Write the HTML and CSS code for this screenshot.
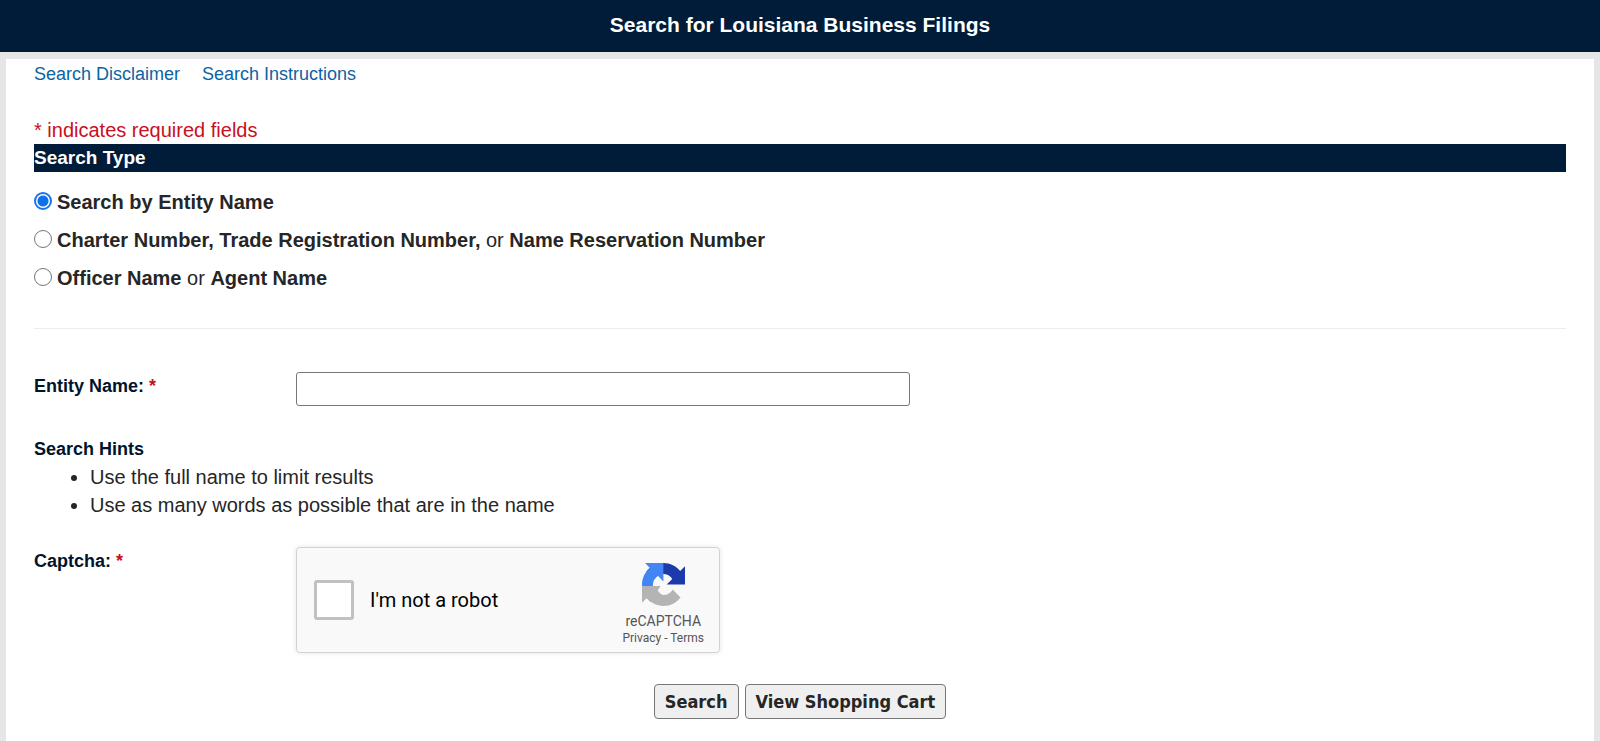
FILE: index.html
```html
<!DOCTYPE html>
<html lang="en">
<head>
<meta charset="utf-8">
<meta name="viewport" content="width=device-width, initial-scale=1">
<title>Search for Louisiana Business Filings</title>
<link rel="stylesheet" href="styles.css">
</head>
<body>
<header class="banner"><h1 class="banner-title">Search for Louisiana Business Filings</h1></header>
<main class="panel">
  <nav class="links">
    <a href="#disclaimer">Search Disclaimer</a>
    <a href="#instructions">Search Instructions</a>
  </nav>
  <form class="search-form">
    <p class="required-note">* indicates required fields</p>
    <h2 class="section-bar" id="search-type">Search Type</h2>
    <div class="options" role="radiogroup" aria-labelledby="search-type">
      <div class="option">
        <input class="radio" type="radio" name="type" id="by-entity" checked>
        <label for="by-entity"><b>Search by Entity Name</b></label>
      </div>
      <div class="option">
        <input class="radio" type="radio" name="type" id="by-number">
        <label for="by-number"><b>Charter Number, Trade Registration Number,</b> or <b>Name Reservation Number</b></label>
      </div>
      <div class="option">
        <input class="radio" type="radio" name="type" id="by-officer">
        <label for="by-officer"><b>Officer Name</b> or <b>Agent Name</b></label>
      </div>
    </div>
    <hr class="divider">
    <div class="field">
      <label class="field-label" for="entity-name">Entity Name: <span class="star">*</span></label>
      <input class="text-box" type="text" id="entity-name" required>
    </div>
    <section class="hints">
      <h3 class="hints-title">Search Hints</h3>
      <ul class="hints-list">
        <li>Use the full name to limit results</li>
        <li>Use as many words as possible that are in the name</li>
      </ul>
    </section>
    <div class="field">
      <span class="field-label">Captcha: <span class="star">*</span></span>
      <div class="captcha">
        <input class="captcha-check" type="checkbox" id="robot">
        <label class="captcha-label" for="robot">I'm not a robot</label>
        <div class="captcha-brand">
          <svg class="captcha-logo" viewBox="0 0 64 64" aria-hidden="true">
            <path fill="#1c3aa9" d="M64 31.955l-.033-1.37V4.687l-7.16 7.16C50.948 4.674 42.033.093 32.05.093c-10.4 0-19.622 4.96-25.458 12.64l11.736 11.86a15.55 15.55 0 0 1 4.754-5.334c2.05-1.6 4.952-2.906 8.968-2.906.485 0 .86.057 1.135.163 4.976.393 9.288 3.14 11.828 7.124l-8.307 8.307L64 31.953"/>
            <path fill="#4285f4" d="M31.862.094l-1.37.033H4.594l7.16 7.16C4.58 13.147 0 22.06 0 32.046c0 10.4 4.96 19.622 12.64 25.458L24.5 45.768a15.55 15.55 0 0 1-5.334-4.754c-1.6-2.05-2.906-4.952-2.906-8.968 0-.485.057-.86.163-1.135.393-4.976 3.14-9.288 7.124-11.828l8.307 8.307L31.86.095"/>
            <path fill="#b4b4b4" d="M.001 32.045l.033 1.37v25.898l7.16-7.16c5.86 7.173 14.774 11.754 24.76 11.754 10.4 0 19.622-4.96 25.458-12.64l-11.736-11.86a15.55 15.55 0 0 1-4.754 5.334c-2.05 1.6-4.952 2.906-8.968 2.906-4-.5-6.5-3.6-8.6-6.6l4.3-6.7c-10.522.04-22.4.066-27.295-.005"/>
          </svg>
          <span class="captcha-name">reCAPTCHA</span>
          <span class="captcha-legal"><a href="#privacy">Privacy</a> - <a href="#terms">Terms</a></span>
        </div>
      </div>
    </div>
    <div class="actions">
      <button class="button" type="submit">Search</button>
      <button class="button" type="button">View Shopping Cart</button>
    </div>
  </form>
</main>
</body>
</html>
```

FILE: styles.css
```css
* { box-sizing: border-box; }

body {
  margin: 0;
  min-height: 100vh;
  display: flex;
  flex-direction: column;
  background: #e6e6e6;
  color: #262626;
  font-family: "Liberation Sans", Arial, sans-serif;
  font-size: 20px;
  line-height: 28px;
}

h1, h2, h3, p, ul { margin: 0; padding: 0; }

.banner {
  background: #001c38;
  color: #fff;
  padding: 11px 16px 13px;
  text-align: center;
}

.banner-title { font-size: 21px; line-height: 28px; }

.panel {
  flex: 1;
  margin: 7px 6px 0;
  padding: 1px 28px 20px;
  background: #fff;
}

.links { display: flex; gap: 22px; font-size: 18px; }
.links a { color: #0b63a5; text-decoration: none; }

.required-note { margin-top: 28px; color: #c8101c; }

.section-bar {
  background: #001c38;
  color: #fff;
  font-size: 19px;
  line-height: 28px;
}

.options { padding-top: 16px; }

.option {
  display: flex;
  align-items: flex-start;
  gap: 5px;
  padding-bottom: 10px;
}

.radio {
  appearance: none;
  flex: none;
  width: 18px;
  height: 18px;
  margin: 4px 0 0;
  border: 1px solid #767676;
  border-radius: 50%;
  background: #fff;
}

.radio:checked {
  border: 2px solid #1a73e8;
  background: radial-gradient(circle, #1070e8 5px, #fff 6px);
}

.divider {
  margin: 26px 0 43px;
  border: 0;
  border-top: 1px solid #ececec;
}

.field {
  display: grid;
  grid-template-columns: 262px minmax(0, 1fr);
  align-items: start;
}

.field-label { color: #00142c; font-size: 18px; font-weight: bold; }
.star { color: #c8101c; }

.text-box {
  width: 100%;
  max-width: 614px;
  height: 34px;
  padding: 2px 6px;
  border: 1px solid #767676;
  border-radius: 3px;
  background: #fff;
  font: inherit;
}

.hints { margin: 29px 0 28px; }
.hints-title { color: #00142c; font-size: 18px; line-height: 28px; }
.hints-list { padding-left: 56px; }

.captcha {
  display: flex;
  align-items: center;
  width: 100%;
  max-width: 424px;
  height: 106px;
  padding: 0 15px 0 17px;
  border: 1px solid #d3d3d3;
  border-radius: 4px;
  background: #f9f9f9;
  box-shadow: 0 0 4px 1px rgba(0, 0, 0, 0.08);
  font-family: Roboto, sans-serif;
}

.captcha-check {
  appearance: none;
  flex: none;
  width: 40px;
  height: 40px;
  margin: 0 16px 0 0;
  border: 3px solid #c1c1c1;
  border-radius: 3px;
  background: #fff;
}

.captcha-label { flex: 1; color: #000; font-size: 20px; }

.captcha-brand {
  display: flex;
  flex-direction: column;
  align-items: center;
  padding-top: 8px;
  color: #555;
}

.captcha-logo { width: 43px; height: 43px; }
.captcha-name { font-size: 14px; line-height: 18px; padding-top: 6px; }
.captcha-legal { font-size: 12px; line-height: 16px; }
.captcha-legal a { color: inherit; text-decoration: none; }

.actions {
  display: flex;
  justify-content: center;
  gap: 6px;
  margin-top: 31px;
}

.button {
  height: 35px;
  padding: 0 10px;
  border: 1px solid #767676;
  border-radius: 4px;
  background: #efefef;
  color: #262626;
  font-family: "DejaVu Sans Condensed", "Noto Sans", sans-serif;
  font-size: 18px;
  font-weight: bold;
  line-height: 28px;
}
```
